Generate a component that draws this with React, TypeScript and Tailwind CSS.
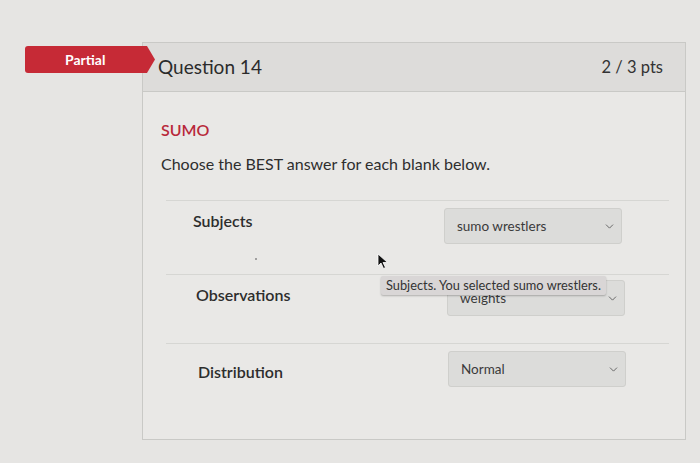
import { ChevronDown } from "lucide-react";

const rows = [
  { label: "Subjects", value: "sumo wrestlers", labelPad: "pl-[27px] pt-[8px]", selLeft: "ml-0", h: "h-[74px]", pt: "pt-[7px]" },
  { label: "Observations", value: "weights", labelPad: "pl-[30px] pt-[8px]", selLeft: "ml-[3px]", h: "h-[69px]", pt: "pt-[5px]" },
  { label: "Distribution", value: "Normal", labelPad: "pl-[32px] pt-[16px]", selLeft: "ml-[4px]", h: "h-[72px]", pt: "pt-[7px]" },
];

function Select({ value }: { value: string }) {
  return (
    <div className="flex h-[36px] w-[178px] items-center justify-between rounded-[3px] border border-[#cfcfcc] bg-[#dcdcda] pl-3 pr-[5px] text-[13.5px] text-[#3a3a3a]">
      <span>{value}</span>
      <ChevronDown className="size-[13px] text-[#666]" strokeWidth={1.8} />
    </div>
  );
}

export default function App() {
  return (
    <div
      className="relative h-[463px] w-[700px] overflow-hidden bg-[#e6e5e3] pl-[142px] pt-[42px]"
      style={{ fontFamily: "Lato, 'Open Sans', sans-serif" }}
    >
      <div className="relative h-[398px] w-[544px] border border-[#c9c9c6] bg-[#e9e8e6]">
        {/* Partial badge */}
        <div className="absolute left-[-118px] top-[3px] flex h-[27px] items-center">
          <div className="flex h-[27px] w-[122px] items-center rounded-l-[3px] bg-[#c62a36] pl-[40px] text-[14px] font-bold text-white">
            Partial
          </div>
          <svg width="8" height="27" viewBox="0 0 8 27" className="block">
            <polygon points="0,0 8,13.5 0,27" fill="#c62a36" />
          </svg>
        </div>

        <div className="flex h-[49px] items-center justify-between border-b border-[#c9c9c6] bg-[#dddcda] pl-[15px] pr-[22px]">
          <span className="text-[19px] text-[#2b2b2b]">Question 14</span>
          <span className="text-[16.5px] text-[#333]">2 / 3 pts</span>
        </div>

        <div className="pl-[18px] pt-[26px]">
          <div className="text-[16px] font-semibold text-[#b8283a]">SUMO</div>
          <div className="mt-[10px] text-[16px] text-[#2e2e2e]">
            Choose the BEST answer for each blank below.
          </div>

          <div className="ml-[5px] mt-[24px] w-[503px]">
            {rows.map((r) => (
              <div key={r.label} className={`flex border-t border-[#d6d6d3] ${r.h}`}>
                <div
                  className={`w-[278px] shrink-0 ${r.labelPad} text-[16px] font-semibold text-[#2d2d2d]`}
                >
                  {r.label}
                </div>
                <div className={`${r.selLeft} ${r.pt}`}>
                  <Select value={r.value} />
                </div>
              </div>
            ))}
          </div>
        </div>

        {/* stray dot */}
        <div className="absolute left-[112px] top-[215px] h-[2px] w-[2px] rounded-full bg-[#888]" />

        {/* cursor */}
        <svg
          className="absolute left-[234px] top-[210px]"
          width="12"
          height="17"
          viewBox="0 0 12 17"
        >
          <path d="M1 1 L1 13 L4 10 L6.5 15.5 L8.5 14.5 L6 9.5 L10.5 9.5 Z" fill="#111" stroke="#fff" strokeWidth="0.8" />
        </svg>

        {/* tooltip */}
        <div className="absolute left-[238px] top-[233px] flex h-[19px] items-center rounded-[2px] bg-[#d9d6d6] px-[5px] text-[12.8px] text-[#333] shadow-[0_1px_2px_rgba(0,0,0,0.25)]">
          Subjects. You selected sumo wrestlers.
        </div>
      </div>
    </div>
  );
}
